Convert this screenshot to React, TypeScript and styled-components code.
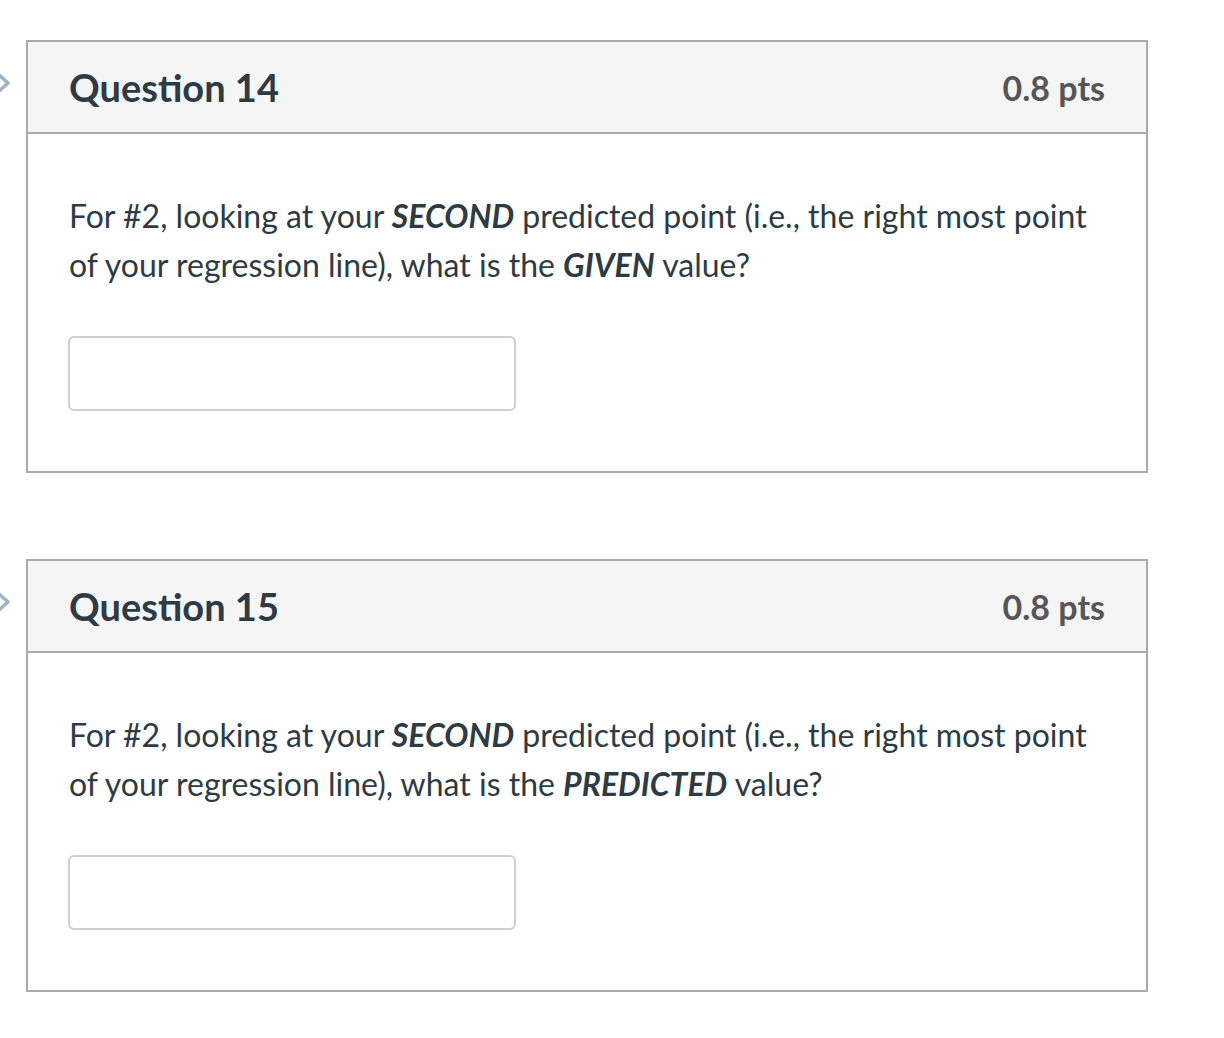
import styled, { createGlobalStyle } from "styled-components";

const GlobalStyle = createGlobalStyle`
  body {
    margin: 0;
    background: #fff;
    font-family: Lato, "Open Sans", sans-serif;
    color: #2d3b45;
  }
`;

type Question = {
  number: number;
  points: string;
  target: string;
};

const questions: Question[] = [
  { number: 14, points: "0.8 pts", target: "GIVEN" },
  { number: 15, points: "0.8 pts", target: "PREDICTED" },
];

const Page = styled.div`
  display: flex;
  flex-direction: column;
  gap: 86px;
  padding: 40px 0 40px 26px;
  width: 1122px;
`;

const Card = styled.section`
  position: relative;
  border: 2px solid #aaaaaa;
  background: #fff;
`;

// bookmark flag, mostly off-screen to the left
const Flag = styled.svg`
  position: absolute;
  left: -40px;
  top: 20px;
  overflow: visible;
`;

const Header = styled.header`
  display: flex;
  align-items: center;
  justify-content: space-between;
  height: 90px;
  padding: 0 41px;
  background: #f5f5f5;
  border-bottom: 2px solid #aaaaaa;
`;

const Title = styled.h2`
  margin: 0;
  font-size: 38px;
  font-weight: 700;
  color: #2d3b45;
`;

const Points = styled.span`
  font-size: 34px;
  font-weight: 700;
  color: #565656;
`;

const Body = styled.div`
  padding: 57px 41px 60px;
`;

const Prompt = styled.p`
  margin: 0 0 47px;
  font-size: 32px;
  line-height: 49px;
  color: #2d3b45;

  strong {
    font-weight: 700;
    font-style: italic;
  }
`;

const Answer = styled.input`
  display: block;
  box-sizing: border-box;
  width: 448px;
  height: 75px;
  margin: 0 0 0 -1px;
  border: 2px solid #cfcfcf;
  border-radius: 6px;
  background: #fff;
  font: inherit;
  font-size: 28px;
  padding: 0 16px;
  outline: none;
`;

function QuestionCard({ question }: { question: Question }) {
  return (
    <Card>
      <Flag width="20" height="42" viewBox="0 0 20 42">
        <polyline
          points="-20,3 0,3 20,21 0,39 -20,39"
          fill="none"
          stroke="#9db3c6"
          strokeWidth="3.5"
          strokeLinejoin="round"
        />
      </Flag>
      <Header>
        <Title>Question {question.number}</Title>
        <Points>{question.points}</Points>
      </Header>
      <Body>
        <Prompt>
          For #2, looking at your <strong>SECOND</strong> predicted point
          (i.e., the right most point of your regression line), what is the{" "}
          <strong>{question.target}</strong> value?
        </Prompt>
        <Answer type="text" aria-label={`Answer for question ${question.number}`} />
      </Body>
    </Card>
  );
}

export default function App() {
  return (
    <>
      <GlobalStyle />
      <Page>
        {questions.map((q) => (
          <QuestionCard key={q.number} question={q} />
        ))}
      </Page>
    </>
  );
}
